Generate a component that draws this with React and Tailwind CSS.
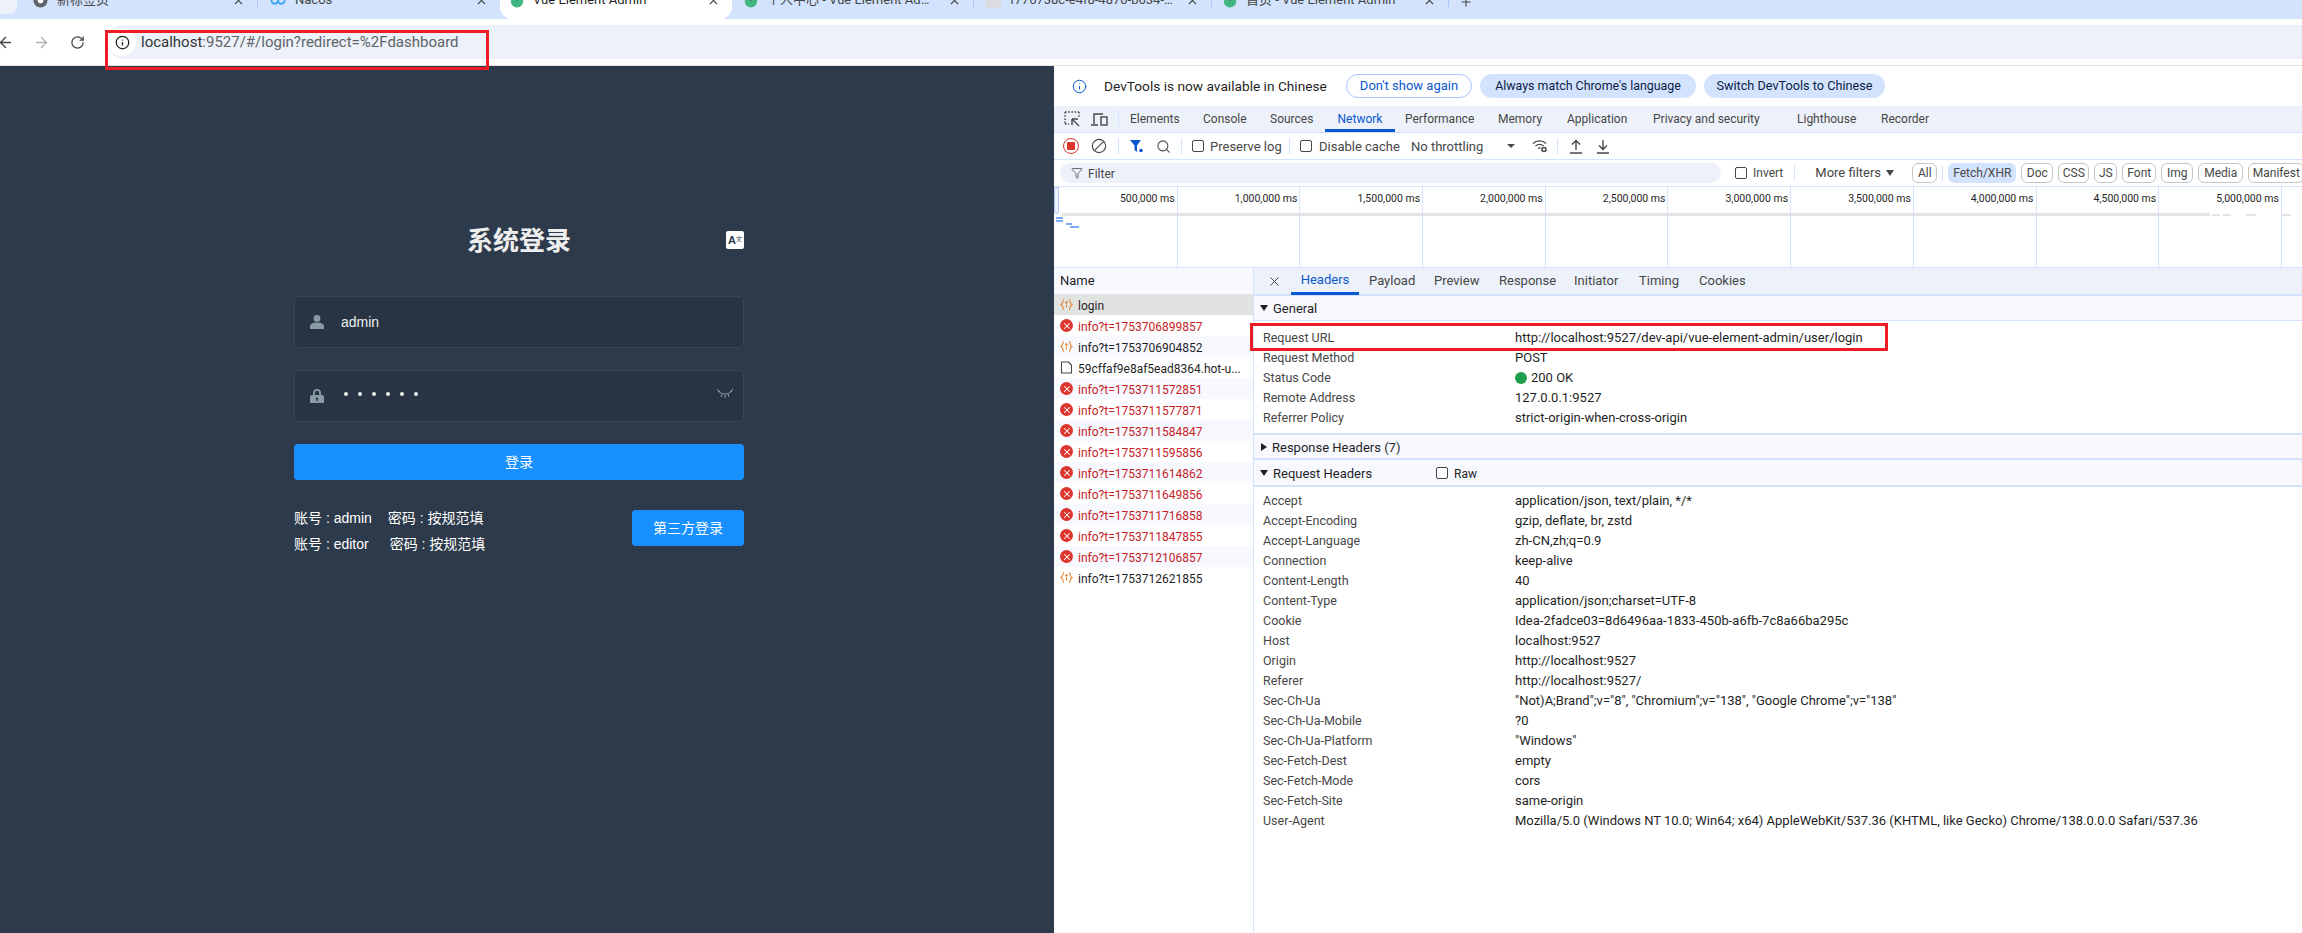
import React from "react";
import { X, Plus, ArrowLeft, ArrowRight, RotateCw, Info, Search, Ban, Filter } from "lucide-react";

const UI = "font-['Roboto','Noto_Sans_CJK_SC',sans-serif]";

const browserTabs = [
    { title: "新标签页", start: 33, end: 258, favicon: "chrome" },
    { title: "Nacos", start: 258, end: 500, favicon: "nacos" },
    { title: "Vue Element Admin", start: 500, end: 732, favicon: "vue", active: true },
    { title: "个人中心 - Vue Element Admin", start: 732, end: 973, favicon: "vue" },
    { title: "f776738c-e4f8-4870-b634-5c", start: 973, end: 1211, favicon: "blank" },
    { title: "首页 - Vue Element Admin", start: 1211, end: 1449, favicon: "vue" },
];

const nameRows = [
    { name: "login", kind: "xhr", selected: true },
    { name: "info?t=1753706899857", kind: "error" },
    { name: "info?t=1753706904852", kind: "xhr" },
    { name: "59cffaf9e8af5ead8364.hot-u...", kind: "doc" },
    { name: "info?t=1753711572851", kind: "error" },
    { name: "info?t=1753711577871", kind: "error" },
    { name: "info?t=1753711584847", kind: "error" },
    { name: "info?t=1753711595856", kind: "error" },
    { name: "info?t=1753711614862", kind: "error" },
    { name: "info?t=1753711649856", kind: "error" },
    { name: "info?t=1753711716858", kind: "error" },
    { name: "info?t=1753711847855", kind: "error" },
    { name: "info?t=1753712106857", kind: "error" },
    { name: "info?t=1753712621855", kind: "xhr" },
];

const generalRows = [
    ["Request URL", "http://localhost:9527/dev-api/vue-element-admin/user/login"],
    ["Request Method", "POST"],
    ["Status Code", "200 OK"],
    ["Remote Address", "127.0.0.1:9527"],
    ["Referrer Policy", "strict-origin-when-cross-origin"],
];

const requestRows = [
    ["Accept", "application/json, text/plain, */*"],
    ["Accept-Encoding", "gzip, deflate, br, zstd"],
    ["Accept-Language", "zh-CN,zh;q=0.9"],
    ["Connection", "keep-alive"],
    ["Content-Length", "40"],
    ["Content-Type", "application/json;charset=UTF-8"],
    ["Cookie", "Idea-2fadce03=8d6496aa-1833-450b-a6fb-7c8a66ba295c"],
    ["Host", "localhost:9527"],
    ["Origin", "http://localhost:9527"],
    ["Referer", "http://localhost:9527/"],
    ["Sec-Ch-Ua", "\"Not)A;Brand\";v=\"8\", \"Chromium\";v=\"138\", \"Google Chrome\";v=\"138\""],
    ["Sec-Ch-Ua-Mobile", "?0"],
    ["Sec-Ch-Ua-Platform", "\"Windows\""],
    ["Sec-Fetch-Dest", "empty"],
    ["Sec-Fetch-Mode", "cors"],
    ["Sec-Fetch-Site", "same-origin"],
    ["User-Agent", "Mozilla/5.0 (Windows NT 10.0; Win64; x64) AppleWebKit/537.36 (KHTML, like Gecko) Chrome/138.0.0.0 Safari/537.36"],
];

const rulerLabels = ["500,000 ms", "1,000,000 ms", "1,500,000 ms", "2,000,000 ms", "2,500,000 ms", "3,000,000 ms", "3,500,000 ms", "4,000,000 ms", "4,500,000 ms", "5,000,000 ms"];

const Favicon = ({ type }) => {
    if (type === "chrome") {
        return (
            <svg width="15" height="15" viewBox="0 0 16 16" className="shrink-0">
                <circle cx="8" cy="8" r="7.5" fill="#5f6368" />
                <circle cx="8" cy="8" r="3" fill="#fff" />
            </svg>
        );
    }
    if (type === "nacos") {
        return (
            <svg width="16" height="15" viewBox="0 0 16 16" fill="none" stroke="#3ba7f5" strokeWidth="2" className="shrink-0">
                <circle cx="4.5" cy="8" r="3.5" />
                <circle cx="11.5" cy="8" r="3.5" />
            </svg>
        );
    }
    if (type === "vue") {
        return (
            <svg width="14" height="15" viewBox="0 0 16 16" className="shrink-0">
                <path d="M1 2h14v7a7 7 0 0 1-14 0z" fill="#41b883" />
                <path d="M5 2h6L8 9z" fill="#35495e" />
            </svg>
        );
    }
    return <div className="w-[16px] h-[15px] bg-[#dadce0] shrink-0" />;
};

const TabBar = () => (
    <div className="flex h-[19px] bg-[#d3e3fd] overflow-hidden">
        <div className="w-[17px] h-[14px] bg-[#edf2fa] rounded-br-lg" />
        <div className="w-[16px]" />
        {browserTabs.map((tab) => (
            <div
                key={tab.title}
                style={{ width: tab.end - tab.start, paddingLeft: tab.active ? 10 : tab.favicon === "chrome" ? 0 : 12 }}
                className={`flex items-center h-[19px] shrink-0 text-[13px] ${tab.active ? "bg-white rounded-b-xl text-[#1f1f1f]" : "text-[#444746]"}`}
            >
                <div className="flex items-center -mt-[19px] w-full">
                    <Favicon type={tab.favicon} />
                    <span className="ml-[9px] flex-1 truncate whitespace-nowrap">{tab.title}</span>
                    <X size={13} strokeWidth={2} className="mx-[12px] text-[#444746] shrink-0" />
                </div>
                {!tab.active && tab.title !== "Nacos" && <div className="w-px h-[7px] bg-[#a8c7fa] self-start shrink-0" />}
            </div>
        ))}
        <Plus size={14} strokeWidth={2} className="ml-[10px] -mt-[5px] text-[#444746]" />
    </div>
);

const AddressBar = () => (
    <div className="flex items-center h-[47px] bg-white border-b border-[#e0e0e0]">
        <div className="flex items-center w-[107px] text-[#444746]">
            <ArrowLeft size={17} strokeWidth={2} className="-ml-[3px]" />
            <ArrowRight size={17} strokeWidth={2} className="ml-[19px] text-[#b0b3b6]" />
            <RotateCw size={15} strokeWidth={2} className="ml-[20px]" />
        </div>
        <div className="flex-1 flex items-center h-[34px] bg-[#edf2fa] rounded-l-[17px]">
            <div className="flex items-center justify-center w-[28px] h-[28px] rounded-full bg-white ml-[1px]">
                <Info size={15} strokeWidth={2} className="text-[#1f1f1f]" />
            </div>
            <span className="ml-[5px] text-[15px] text-[#5f6368] whitespace-nowrap">
                <span className="text-[#303134]">localhost</span>:9527/#/login?redirect=%2Fdashboard
            </span>
        </div>
    </div>
);

const LoginField = ({ icon, children, right }) => (
    <div className="flex items-center h-[52px] bg-[#283443] border border-[#3a4554] rounded-[5px] pl-[15px] pr-[10px]">
        {icon}
        {children}
        {right}
    </div>
);

const LoginPanel = () => (
    <div className="w-[1054px] shrink-0 bg-[#2d3a4b] pl-[294px] font-['Liberation_Sans','Noto_Sans_CJK_SC',sans-serif]">
        <div className="w-[450px] pt-[155px]">
            <div className="grid grid-cols-[1fr_auto_1fr] items-center h-[38px]">
                <div />
                <h3 className="text-[26px] font-bold text-[#eeeeee] leading-none pt-[2px]">系统登录</h3>
                <div className="justify-self-end flex items-center justify-center w-[18px] h-[18px] bg-white rounded-[2px]">
                    <span className="text-[11px] font-bold text-[#2d3a4b] leading-none">A<sup className="text-[6px] font-normal">文</sup></span>
                </div>
            </div>
            <div className="mt-[37px]">
                <LoginField
                    icon={
                        <svg width="14" height="14" viewBox="0 0 14 14" className="shrink-0 fill-[#889aa4]">
                            <circle cx="7" cy="3.4" r="3.4" />
                            <path d="M0 14v-2.5C0 9 3 7.6 7 7.6s7 1.4 7 3.9V14z" />
                        </svg>
                    }
                >
                    <span className="ml-[17px] text-[14px] text-[#eeeeee]">admin</span>
                </LoginField>
            </div>
            <div className="mt-[22px]">
                <LoginField
                    icon={
                        <svg width="14" height="14" viewBox="0 0 14 14" className="shrink-0 fill-[#889aa4]">
                            <path d="M3 6V4a4 4 0 0 1 8 0v2h1a2 2 0 0 1 2 2v6H0V8a2 2 0 0 1 2-2zm1.8 0h4.4V4a2.2 2.2 0 0 0-4.4 0zM7 8.6a1.2 1.2 0 0 0-.6 2.2V12h1.2v-1.2A1.2 1.2 0 0 0 7 8.6z" fillRule="evenodd" />
                        </svg>
                    }
                    right={
                        <svg width="16" height="10" viewBox="0 0 16 10" fill="none" stroke="#889aa4" strokeWidth="1" className="shrink-0 ml-auto -mt-[4px]">
                            <path d="M1 2c4 4 10 4 14 0M0 0l3 3M16 0l-3 3M5 5l-1 3M11 5l1 3M8 6v3" />
                        </svg>
                    }
                >
                    <div className="ml-[20px] flex gap-[10px] -mt-[4px]">
                        {[0, 1, 2, 3, 4, 5].map((i) => (
                            <div key={i} className="w-[4px] h-[4px] rounded-full bg-[#eeeeee]" />
                        ))}
                    </div>
                </LoginField>
            </div>
            <button className="block w-full h-[36px] mt-[22px] bg-[#1890ff] rounded-[4px] text-[14px] text-white">登录</button>
            <div className="flex justify-between mt-[30px]">
                <div className="text-[14px] text-white leading-[26px] -mt-[5px]">
                    <div>
                        <span className="mr-[16px]">账号 : admin</span>
                        <span>密码 : 按规范填</span>
                    </div>
                    <div>
                        <span className="mr-[21px]">账号 : editor</span>
                        <span>密码 : 按规范填</span>
                    </div>
                </div>
                <button className="w-[112px] h-[36px] bg-[#1890ff] rounded-[4px] text-[14px] text-white">第三方登录</button>
            </div>
        </div>
    </div>
);

const VDivider = ({ className = "" }) => <div className={`w-px h-[16px] bg-[#d3e3fd] shrink-0 ${className}`} />;

const InfoBar = () => (
    <div className="flex items-center h-[40px] bg-white pl-[18px] text-[13.7px]">
        <Info size={15} strokeWidth={1.6} className="text-[#0b57d0] shrink-0" />
        <span className="ml-[17px] text-[#1f1f1f] whitespace-nowrap w-[226px]">DevTools is now available in Chinese</span>
        <button className="ml-[16px] w-[126px] h-[24px] rounded-full border border-[#a8c7fa] text-[13px] text-[#0b57d0]">Don't show again</button>
        <button className="ml-[8px] w-[216px] h-[24px] rounded-full bg-[#d3e3fd] text-[12.4px] text-[#0a1d47]">Always match Chrome's language</button>
        <button className="ml-[8px] w-[181px] h-[24px] rounded-full bg-[#d3e3fd] text-[12.7px] text-[#0a1d47]">Switch DevTools to Chinese</button>
    </div>
);

const MainTabs = () => (
    <div className="flex items-center h-[27px] bg-[#edf2fa] border-b border-[#d3e3fd] text-[12px] text-[#474747]">
        <svg width="16" height="16" viewBox="0 0 16 16" fill="none" stroke="#474747" strokeWidth="1.4" className="ml-[10px] shrink-0">
            <path d="M1 1h14M1 1v12M1 13h4M15 1v5" strokeDasharray="1.6 1.6" />
            <path d="M8 8h6M8 8v6M8 8l7 7" />
        </svg>
        <svg width="17" height="15" viewBox="0 0 17 15" fill="none" stroke="#474747" strokeWidth="1.4" className="ml-[11px] shrink-0">
            <path d="M3 12V2h9M0 13h7" />
            <rect x="10" y="5" width="6" height="8" />
        </svg>
        <VDivider className="ml-[10px]" />
        <span className="ml-[11px] w-[52px]">Elements</span>
        <span className="ml-[21px] w-[46px]">Console</span>
        <span className="ml-[21px] w-[44px]">Sources</span>
        <div className="ml-[11px] w-[70px] h-full flex items-center justify-center text-[#0b57d0] border-b-[3px] border-[#0b57d0] pt-[3px]">Network</div>
        <span className="ml-[10px] w-[72px]">Performance</span>
        <span className="ml-[21px] w-[49px]">Memory</span>
        <span className="ml-[20px] w-[65px]">Application</span>
        <span className="ml-[21px] w-[113px] whitespace-nowrap">Privacy and security</span>
        <span className="ml-[31px] w-[63px]">Lighthouse</span>
        <span className="ml-[21px]">Recorder</span>
    </div>
);

const Checkbox = () => <div className="w-[12px] h-[12px] rounded-[2px] border border-[#474747] bg-white shrink-0" />;

const NetworkToolbar = () => (
    <div className="flex items-center h-[27px] bg-white border-b border-[#d3e3fd] text-[13px] text-[#474747]">
        <div className="ml-[9px] w-[16px] h-[16px] rounded-full border-[1.5px] border-[#dc362e] flex items-center justify-center shrink-0">
            <div className="w-[8px] h-[8px] bg-[#dc362e] rounded-[1px]" />
        </div>
        <Ban size={16} strokeWidth={1.7} className="ml-[12px] shrink-0 rotate-90" />
        <VDivider className="ml-[11px]" />
        <svg width="14" height="14" viewBox="0 0 14 14" className="ml-[11px] shrink-0">
            <path d="M0 1h11L7 6.5V13L4.5 11V6.5z" fill="#0b57d0" />
            <circle cx="11" cy="11.5" r="1.8" fill="#0b57d0" />
        </svg>
        <Search size={15} strokeWidth={1.7} className="ml-[12px] shrink-0" />
        <VDivider className="ml-[10px]" />
        <div className="ml-[10px]"><Checkbox /></div>
        <span className="ml-[6px] pt-[2px] w-[69px] whitespace-nowrap">Preserve log</span>
        <VDivider className="ml-[10px]" />
        <div className="ml-[10px]"><Checkbox /></div>
        <span className="ml-[7px] pt-[2px] w-[77px] whitespace-nowrap">Disable cache</span>
        <span className="ml-[15px] pt-[2px] w-[74px] whitespace-nowrap">No throttling</span>
        <div className="ml-[22px] w-0 h-0 border-x-[4px] border-x-transparent border-t-[4px] border-t-[#474747]" />
        <svg width="16" height="14" viewBox="0 0 16 14" fill="none" stroke="#474747" strokeWidth="1.3" className="ml-[17px] shrink-0">
            <path d="M1 4.5C4.5 1 10.5 1 14 4.5M3.5 7C6 5 9 5 11.5 7M6 9.5c.8-.6 1.8-.8 2.6-.6" />
            <circle cx="12" cy="10.5" r="2" strokeWidth="1.6" />
        </svg>
        <VDivider className="ml-[9px]" />
        <svg width="12" height="15" viewBox="0 0 12 15" fill="none" stroke="#474747" strokeWidth="1.4" className="ml-[12px] shrink-0">
            <path d="M6 11V1.5M2 5.5l4-4 4 4M0 14h12" />
        </svg>
        <svg width="12" height="15" viewBox="0 0 12 15" fill="none" stroke="#474747" strokeWidth="1.4" className="ml-[15px] shrink-0">
            <path d="M6 1v9.5M2 6.5l4 4 4-4M0 14h12" />
        </svg>
    </div>
);

const TypePill = ({ label, active, width }) => (
    <div
        style={{ width }}
        className={`flex items-center justify-center h-[20px] rounded-[6px] shrink-0 text-[#474747] ${active ? "bg-[#d3e3fd] text-[#0a1d47]" : "border border-[#c4c7c5]"}`}
    >
        {label}
    </div>
);

const FilterBar = () => (
    <div className="flex items-center h-[27px] bg-white border-b border-[#d3e3fd] text-[12px] text-[#474747]">
        <div className="ml-[6px] w-[661px] h-[20px] bg-[#edf2fa] rounded-full flex items-center pl-[11px] shrink-0">
            <Filter size={12} strokeWidth={1.6} className="shrink-0" />
            <span className="ml-[5px] pt-[1px]">Filter</span>
        </div>
        <div className="ml-[14px]"><Checkbox /></div>
        <span className="ml-[6px] w-[34px]">Invert</span>
        <VDivider className="ml-[11px]" />
        <span className="ml-[20px] w-[65px] whitespace-nowrap text-[13px]">More filters</span>
        <div className="ml-[6px] w-0 h-0 border-x-[4px] border-x-transparent border-t-[6px] border-t-[#474747]" />
        <div className="ml-[18px] flex items-center gap-[5px]">
            <TypePill label="All" width={25} />
            <div className="w-px h-[16px] bg-[#d3e3fd]" />
            <TypePill label="Fetch/XHR" width={68} active />
            <TypePill label="Doc" width={32} />
            <TypePill label="CSS" width={31} />
            <TypePill label="JS" width={23} />
            <TypePill label="Font" width={34} />
            <TypePill label="Img" width={32} />
            <TypePill label="Media" width={45} />
            <TypePill label="Manifest" width={56} />
        </div>
    </div>
);

const Overview = () => (
    <div className="relative h-[81px] bg-white border-b border-[#d3e3fd] text-[10.5px] text-[#1f1f1f] overflow-hidden">
        <div className="flex h-full pl-[1px]">
            {rulerLabels.map((label) => (
                <div key={label} className="w-[122.7px] shrink-0 h-full border-r border-[#d3e3fd] text-right pr-[2px] pt-[4px] whitespace-nowrap">
                    {label}
                </div>
            ))}
        </div>
        {/* activity strip and the little waterfall marks sit over the grid */}
        <div className="absolute left-[8px] top-[26px] w-[1148px] h-[3px] bg-[#e4e4e4]" />
        <div className="absolute left-[1158px] top-[27px] flex gap-[3px]">
            <div className="w-[8px] h-[2px] bg-[#e4e4e4]" />
            <div className="w-[8px] h-[2px] bg-[#e4e4e4]" />
            <div className="w-[10px] h-[2px] bg-[#e4e4e4] ml-[12px]" />
            <div className="w-[10px] h-[2px] bg-[#e4e4e4] ml-[22px]" />
        </div>
        <div className="absolute left-0 top-0 w-[5px] h-[27px] bg-[#edf2fa] border border-[#a8c7fa] rounded-b-[2px]" />
        <div className="absolute left-[2px] top-[30px] w-[7px] h-[2px] bg-[#7cacf8]" />
        <div className="absolute left-[2px] top-[33px] w-[7px] h-[2px] bg-[#7cacf8]" />
        <div className="absolute left-[12px] top-[36px] w-[6px] h-[2px] bg-[#7cacf8]" />
        <div className="absolute left-[16px] top-[39px] w-[9px] h-[2px] bg-[#7cacf8]" />
    </div>
);

const RowIcon = ({ kind }) => {
    if (kind === "error") {
        return (
            <div className="w-[13px] h-[13px] rounded-full bg-[#dc362e] flex items-center justify-center shrink-0">
                <X size={10} strokeWidth={2.5} className="text-white" />
            </div>
        );
    }
    if (kind === "doc") {
        return (
            <svg width="13" height="13" viewBox="0 0 13 13" fill="none" stroke="#474747" strokeWidth="1.1" className="shrink-0">
                <path d="M1.5 1h7l3 3v8h-10z" />
            </svg>
        );
    }
    return (
        <svg width="13" height="13" viewBox="0 0 13 13" fill="none" stroke="#e8842c" strokeWidth="1.1" className="shrink-0">
            <path d="M4 1.5C2.5 1.5 3.5 5.5 1 6.5c2.5 1 1.5 5 3 5M9 1.5c1.5 0 .5 4 3 5-2.5 1-1.5 5-3 5" />
            <circle cx="6.5" cy="4.5" r=".7" fill="#e8842c" />
            <path d="M6.5 6.5v3" />
        </svg>
    );
};

const NamePanel = () => (
    <div className="w-[200px] shrink-0 bg-white border-r border-[#d3e3fd] text-[12px]">
        <div className="flex items-center h-[26px] pl-[6px] bg-[#f8f9ff] text-[#1f1f1f] text-[13px]">Name</div>
        {nameRows.map((row, i) => (
            <div
                key={row.name + i}
                className={`flex items-center h-[21px] pl-[6px] ${row.selected ? "bg-[#e1e3e1]" : i % 2 === 0 ? "bg-[#f8f9ff]" : "bg-white"}`}
            >
                <RowIcon kind={row.kind} />
                <span className={`ml-[5px] pt-[2px] whitespace-nowrap ${row.kind === "error" ? "text-[#c5221f]" : "text-[#1f1f1f]"}`}>{row.name}</span>
            </div>
        ))}
    </div>
);

const DetailTabs = () => (
    <div className="flex items-center h-[28px] bg-[#edf2fa] border-b-2 border-[#d3e3fd] text-[13px] text-[#474747]">
        <X size={15} strokeWidth={1.6} className="ml-[13px] shrink-0" />
        <div className="ml-[9px] w-[68px] h-[28px] flex items-center justify-center text-[#0b57d0] border-b-[3px] border-[#0b57d0]">Headers</div>
        <span className="ml-[10px] w-[44px]">Payload</span>
        <span className="ml-[21px] w-[44px]">Preview</span>
        <span className="ml-[21px] w-[55px]">Response</span>
        <span className="ml-[20px] w-[45px]">Initiator</span>
        <span className="ml-[20px] w-[39px]">Timing</span>
        <span className="ml-[21px]">Cookies</span>
    </div>
);

const SectionHeader = ({ title, open, children, className = "" }) => (
    <div className={`flex items-center h-[25px] bg-[#f8f9ff] text-[13px] text-[#1f1f1f] border-[#d3e3fd] ${className}`}>
        <div
            className={
                open
                    ? "ml-[6px] w-0 h-0 border-x-[4px] border-x-transparent border-t-[6px] border-t-[#1f1f1f]"
                    : "ml-[7px] w-0 h-0 border-y-[4px] border-y-transparent border-l-[6px] border-l-[#1f1f1f]"
            }
        />
        <span className="ml-[5px] pt-[2px] w-[163px] whitespace-nowrap">{title}</span>
        {children}
    </div>
);

const HeaderRow = ({ name, value }) => (
    <div className="flex items-center h-[20px] pl-[9px] pt-[2px] bg-white">
        <span className="w-[252px] shrink-0 text-[12.5px] text-[#474747]">{name}</span>
        {name === "Status Code" && <div className="w-[12px] h-[12px] rounded-full bg-[#1e9e4a] mr-[4px] shrink-0" />}
        <span className="text-[13px] text-[#1f1f1f] whitespace-nowrap">{value}</span>
    </div>
);

const DetailPanel = () => (
    <div className="flex-1 min-w-0 bg-white overflow-hidden">
        <DetailTabs />
        <SectionHeader title="General" open className="border-b" />
        <div className="py-[6px]">
            {generalRows.map(([name, value]) => (
                <HeaderRow key={name} name={name} value={value} />
            ))}
        </div>
        <SectionHeader title="Response Headers (7)" className="h-[27px] border-y-2" />
        <SectionHeader title="Request Headers" open className="h-[27px] border-b-2">
            <Checkbox />
            <span className="ml-[6px] pt-[2px] text-[12px]">Raw</span>
        </SectionHeader>
        <div className="pt-[3px]">
            {requestRows.map(([name, value]) => (
                <HeaderRow key={name} name={name} value={value} />
            ))}
        </div>
    </div>
);

const DevTools = () => (
    <div className={`flex-1 min-w-0 flex flex-col bg-white overflow-hidden ${UI}`}>
        <InfoBar />
        <MainTabs />
        <NetworkToolbar />
        <FilterBar />
        <Overview />
        <div className="flex flex-1 min-h-0">
            <NamePanel />
            <DetailPanel />
        </div>
    </div>
);

const App = () => {
    return (
        <div className={`relative w-[2302px] h-[933px] overflow-hidden bg-white ${UI}`}>
            <TabBar />
            <AddressBar />
            <div className="flex h-[867px]">
                <LoginPanel />
                <DevTools />
            </div>
            {/* red annotation boxes drawn over the screenshot */}
            <div className="absolute left-[105px] top-[30px] w-[384px] h-[40px] border-[3px] border-[#ed1c24]" />
            <div className="absolute left-[1250px] top-[323px] w-[638px] h-[28px] border-[3px] border-[#ed1c24]" />
        </div>
    );
};

export default App;
